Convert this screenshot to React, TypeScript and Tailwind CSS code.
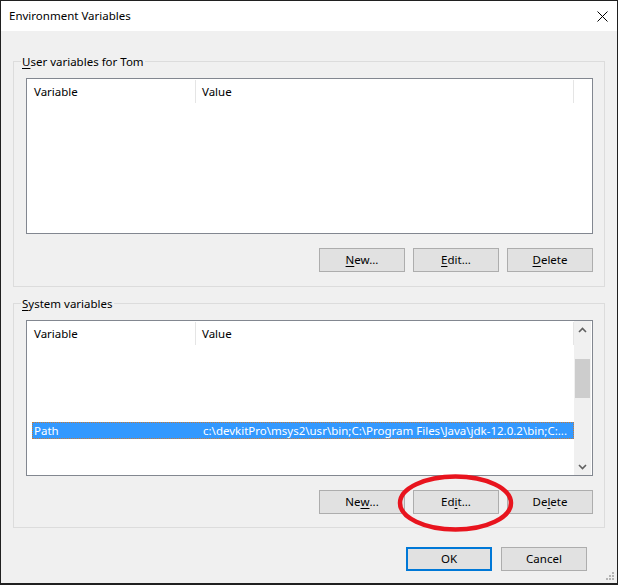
import React from "react";

const FONT = "font-['Noto_Sans','Liberation_Sans',sans-serif]";

function Btn({ children, primary }: { children: React.ReactNode; primary?: boolean }) {
  return (
    <div
      className={
        primary
          ? "w-[86px] h-[24px] flex items-center justify-center bg-[#e1e1e1] border-2 border-[#0078d7] text-[11.5px] text-black"
          : "w-[86px] h-[24px] flex items-center justify-center bg-[#e1e1e1] border border-[#adadad] text-[11.5px] text-black"
      }
    >
      {children}
    </div>
  );
}

function Chevron({ down }: { down?: boolean }) {
  return (
    <svg width="9" height="6" viewBox="0 0 9 6" className={down ? "rotate-180" : ""}>
      <path d="M1 5 L4.5 1.5 L8 5" fill="none" stroke="#606060" strokeWidth="1.6" />
    </svg>
  );
}

function Header() {
  return (
    <div className="h-[25px] flex items-center text-[11.5px] text-black">
      <div className="w-[168px] pl-[7px]">Variable</div>
      <div className="w-px h-[23px] bg-[#e5e5e5]" />
      <div className="w-[377px] pl-[6px]">Value</div>
      <div className="w-px h-[23px] bg-[#e5e5e5]" />
    </div>
  );
}

function Group({ legend, children, pb }: { legend: React.ReactNode; children: React.ReactNode; pb: string }) {
  return (
    <fieldset className="border border-[#dcdcdc] p-0 m-0 min-w-0">
      <legend className="ml-[7px] px-px text-[11.5px] leading-[15px] text-black">{legend}</legend>
      <div className={"pt-[9px] pl-3 pr-[11px] " + pb}>{children}</div>
    </fieldset>
  );
}

export default function App() {
  return (
    <div className={"relative w-[618px] h-[585px] bg-[#202020] pt-px pl-px " + FONT}>
      <div className="w-[616px] h-[582px] bg-[#f0f0f0] flex flex-col">
        <div className="h-[30px] shrink-0 bg-white flex items-center justify-between pl-2 pr-[9px]">
          <span className="text-[11.5px] text-black">Environment Variables</span>
          <svg width="11" height="11" viewBox="0 0 11 11">
            <path d="M0.5 0.5 L10.5 10.5 M10.5 0.5 L0.5 10.5" stroke="#000" strokeWidth="1" />
          </svg>
        </div>

        <div className="px-3 pt-[23px] flex flex-col">
          <Group
            pb="pb-[14px]"
            legend={
              <>
                <span className="underline underline-offset-2">U</span>ser variables for Tom
              </>
            }
          >
            <div className="h-[156px] border border-[#828790] bg-white">
              <Header />
            </div>
            <div className="mt-[14px] flex justify-end gap-2">
              <Btn>
                <span className="underline underline-offset-2">N</span>ew...
              </Btn>
              <Btn>
                <span className="underline underline-offset-2">E</span>dit...
              </Btn>
              <Btn>
                <span className="underline underline-offset-2">D</span>elete
              </Btn>
            </div>
          </Group>

          <div className="mt-[9px]">
            <Group
              pb="pb-[13px]"
              legend={
                <>
                  <span className="underline underline-offset-2">S</span>ystem variables
                </>
              }
            >
              <div className="h-[156px] border border-[#828790] bg-white flex">
                <div className="w-[547px] flex flex-col">
                  <Header />
                  <div className="h-[76px]" />
                  <div className="ml-[5px] w-[542px] h-[17px] flex items-center bg-[#3399ff] border border-dotted border-[#c97a35] text-white text-[11.5px] whitespace-nowrap overflow-hidden">
                    <span className="w-[170px] shrink-0 pl-px">Path</span>
                    <span>{"c:\\devkitPro\\msys2\\usr\\bin;C:\\Program Files\\Java\\jdk-12.0.2\\bin;C:..."}</span>
                  </div>
                </div>
                <div className="w-[17px] flex flex-col bg-[#f0f0f0]">
                  <div className="h-[17px] flex items-center justify-center">
                    <Chevron />
                  </div>
                  <div className="flex-1 pt-[21px] px-px">
                    <div className="h-[39px] bg-[#cdcdcd]" />
                  </div>
                  <div className="h-[17px] flex items-center justify-center">
                    <Chevron down />
                  </div>
                </div>
              </div>
              <div className="mt-[14px] flex justify-end gap-2">
                <Btn>
                  Ne<span className="underline underline-offset-2">w</span>...
                </Btn>
                <Btn>
                  Ed<span className="underline underline-offset-2">i</span>t...
                </Btn>
                <Btn>
                  De<span className="underline underline-offset-2">l</span>ete
                </Btn>
              </div>
            </Group>
          </div>

          <div className="mt-[19px] flex justify-end gap-[9px] pr-[18px]">
            <Btn primary>OK</Btn>
            <Btn>Cancel</Btn>
          </div>
        </div>

        <div className="mt-auto flex justify-end pr-[2px] pb-[2px]">
          <svg width="9" height="9" viewBox="0 0 9 9">
            <rect x="6" y="0" width="2" height="2" fill="#b4b4b4" />
            <rect x="3" y="3" width="2" height="2" fill="#b4b4b4" />
            <rect x="6" y="3" width="2" height="2" fill="#b4b4b4" />
            <rect x="0" y="6" width="2" height="2" fill="#b4b4b4" />
            <rect x="3" y="6" width="2" height="2" fill="#b4b4b4" />
            <rect x="6" y="6" width="2" height="2" fill="#b4b4b4" />
          </svg>
        </div>
      </div>

      <svg className="absolute inset-0 pointer-events-none" width="618" height="585">
        <ellipse cx="455.5" cy="503" rx="55.5" ry="26.5" fill="none" stroke="#e8141e" strokeWidth="4.5" />
      </svg>
    </div>
  );
}
